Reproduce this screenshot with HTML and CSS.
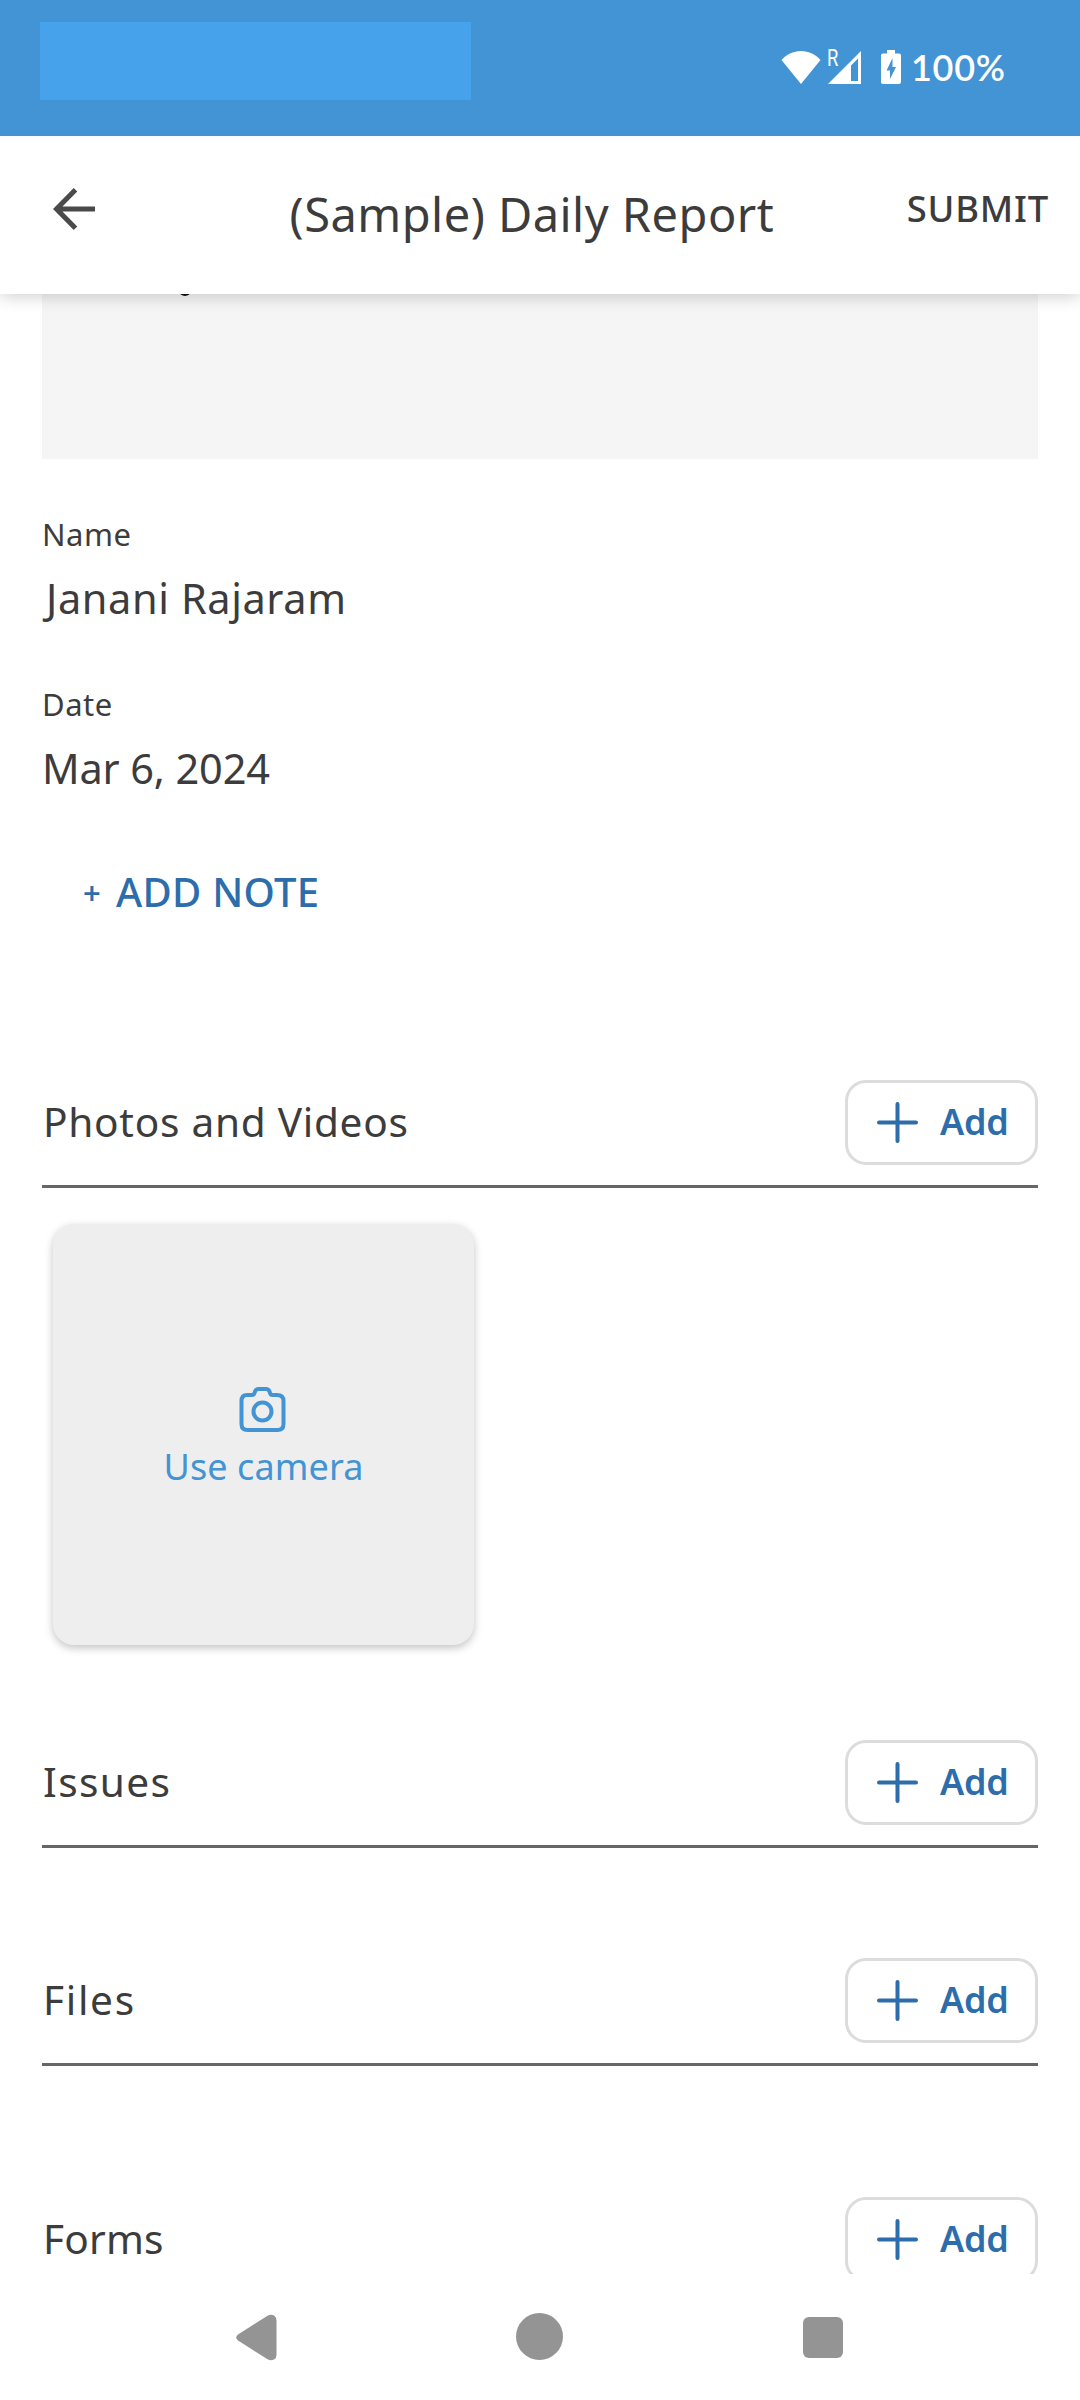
FILE: index.html
```html
<!DOCTYPE html>
<html lang="en">
<head>
<meta charset="utf-8">
<title>Daily Report</title>
<link rel="stylesheet" href="styles.css">
</head>
<body>
<header class="status">
  <div class="status-block"></div>
  <div class="status-icons">
    <svg class="wifi" width="40" height="33" viewBox="0 0 40 33"><path fill="#fff" d="M20 0C28 0 34.500 3.500 39.500 9L20 33L.5 9C5.500 3.500 12 0 20 0Z"/></svg>
    <div class="signal">
      <span class="roaming">R</span>
      <svg width="33" height="33" viewBox="0 0 33 33"><path fill="#fff" fill-rule="evenodd" d="M33 0V33H0ZM23 14.500V30H30V7.500Z"/></svg>
    </div>
    <svg class="battery" width="20" height="34" viewBox="0 0 20 34"><path fill="#fff" fill-rule="evenodd" d="M6 0H14V3.500H18Q20 3.500 20 5.500V32Q20 34 18 34H2Q0 34 0 32V5.500Q0 3.500 2 3.500H6ZM11.500 8L5.500 20.500H9V29L15 17H11.500Z"/></svg>
    <span class="percent">100%</span>
  </div>
</header>
<div class="appbar">
  <svg class="back" width="42" height="42" viewBox="0 0 42 42" fill="none" stroke="#4a4a4a" stroke-width="5"><path d="M42 21H4M22.500 1.800L3.500 21L22.500 40.200"/></svg>
  <h1 class="title">(Sample) Daily Report</h1>
  <button class="submit">SUBMIT</button>
</div>
<main class="content">
  <div class="note-box"><span class="descender"></span></div>
  <div class="field"><div class="label">Name</div><div class="value person">Janani Rajaram</div></div>
  <div class="field"><div class="label">Date</div><div class="value date">Mar 6, 2024</div></div>
  <button class="add-note"><span class="plus">+</span><span>ADD NOTE</span></button>

  <section class="section photos">
    <div class="head"><h2>Photos and Videos</h2><button class="add"><svg width="41" height="41" viewBox="0 0 41 41"><path d="M20.500 2V39M2 20.500H39"/></svg><span>Add</span></button></div>
    <div class="card">
      <svg width="47" height="45" viewBox="0 0 47 45" fill="none" stroke="#4394d4" stroke-width="4" stroke-linejoin="round"><path d="M8 8H13Q15 8 15.500 6L16 4.500Q17 2 19.500 2H27Q29.500 2 30.500 4.500L31 6Q31.500 8 33.500 8H38Q44.500 8 44.500 14V37Q44.500 43 38.500 43H8.500Q2.500 43 2.500 37V14Q2.500 8 8 8Z"/><circle cx="23.500" cy="24.500" r="9"/></svg>
      <span>Use camera</span>
    </div>
  </section>
  <section class="section issues">
    <div class="head"><h2>Issues</h2><button class="add"><svg width="41" height="41" viewBox="0 0 41 41"><path d="M20.500 2V39M2 20.500H39"/></svg><span>Add</span></button></div>
  </section>
  <section class="section files">
    <div class="head"><h2>Files</h2><button class="add"><svg width="41" height="41" viewBox="0 0 41 41"><path d="M20.500 2V39M2 20.500H39"/></svg><span>Add</span></button></div>
  </section>
  <section class="section forms">
    <div class="head"><h2>Forms</h2><button class="add"><svg width="41" height="41" viewBox="0 0 41 41"><path d="M20.500 2V39M2 20.500H39"/></svg><span>Add</span></button></div>
  </section>
</main>
<nav class="navbar">
  <svg width="41" height="47" viewBox="0 0 41 47"><path fill="#949494" d="M32 1.500Q35 0 38 1.500Q40.500 3 40.500 6V41Q40.500 44 38 45.500Q35 47 32 45.500L2 26.500Q-1.500 23.500 2 20.500Z"/></svg>
  <span class="home"></span>
  <span class="recent"></span>
</nav>
</body>
</html>
```
FILE: styles.css
```css
* { box-sizing: border-box; margin: 0; padding: 0; }
body {
  width: 1080px; height: 2400px; overflow: hidden;
  display: flex; flex-direction: column;
  background: #fff; color: #3c3c3c;
  font-family: "Noto Sans", sans-serif;
}
button { background: none; border: 0; font: inherit; color: inherit; }
svg { display: block; flex: none; }

.status {
  flex: none; height: 136px; padding: 22px 75px 0 40px; position: relative; z-index: 2;
  display: flex; justify-content: space-between; align-items: flex-start;
  background: #4394d4;
}
.status-block { width: 431px; height: 78px; background: #46a3eb; }
.status-icons { display: flex; padding-top: 28px; height: 70px; color: #fff; }
.wifi { margin-top: 1px; }
.signal { display: flex; width: 35px; margin: 1px 19px 0 6px; padding: 0 0 0 1px; position: relative; }
.roaming {
  position: absolute; left: 0; top: -1px;
  font: 400 23px/18px Roboto, sans-serif; transform: scaleX(.8); transform-origin: left;
}
.percent { margin: -1px 0 0 10px; width: 94px; font: 600 36px/36px Lato, sans-serif; letter-spacing: .7px; white-space: nowrap; }

.appbar {
  flex: none; height: 158px; padding: 0 31px 0 53px; position: relative; z-index: 1;
  display: flex; justify-content: space-between;
  background: #fff; box-shadow: 0 2px 16px rgba(0, 0, 0, .2);
}
.back { margin-top: 52px; }
.title { margin: 45px -62px 0 0; font-size: 47px; line-height: 66px; font-weight: 400; letter-spacing: .47px; }
.submit { height: 50px; margin-top: 47px; font-size: 36.4px; line-height: 50px; font-weight: 500; letter-spacing: .81px; }

.content { flex: none; height: 1980px; padding: 0 42px; overflow: hidden; }
.note-box { height: 165px; margin-bottom: 55px; background: #f5f5f5; overflow: hidden; }
.descender { display: block; width: 12px; height: 12px; margin: -10px 0 0 137px; border-radius: 50%; background: #111; }
.field { margin-bottom: 58px; }
.label { font-size: 31px; line-height: 40px; font-weight: 400; letter-spacing: .5px; }
.value { margin-top: 16px; font-size: 41.5px; line-height: 56px; font-weight: 400; }
.person { padding-left: 4px; letter-spacing: .6px; }
.date { letter-spacing: -.15px; }
.add-note {
  display: flex; margin: 69px 0 0 41px; height: 54px;
  color: #2e6dab; font-size: 40px; line-height: 54px; font-weight: 500; letter-spacing: .3px;
}
.plus { width: 33px; font-size: 31px; font-weight: 600; text-align: left; }

.head { display: flex; justify-content: space-between; height: 108px; padding-bottom: 20px; border-bottom: 3px solid #666; }
h2 { padding-left: 1px; font-size: 40.6px; line-height: 84px; font-weight: 400; letter-spacing: .72px; }
.photos { margin-top: 161px; }
.issues { margin-top: 95px; }
.issues h2 { letter-spacing: 1.4px; }
.files { margin-top: 110px; }
.files h2 { letter-spacing: 1.7px; }
.forms { margin-top: 131px; }
.forms h2 { letter-spacing: .17px; }
.add {
  display: flex; align-items: center; width: 193px; height: 85px; padding: 0 0 0 29px;
  border: 3px solid #dcdcdc; border-radius: 21px;
  color: #2e6dab; font-size: 36px; font-weight: 600; letter-spacing: -.3px;
}
.add svg { fill: none; stroke: #2e6dab; stroke-width: 4; stroke-linecap: round; }
.add span { margin-left: 22px; padding-bottom: 1px; line-height: 50px; }
.card {
  width: 421px; height: 421px; margin: 36px 0 0 11px; padding-top: 163px;
  display: flex; flex-direction: column; align-items: center;
  border-radius: 21px; background: #eee; color: #4394d4;
  box-shadow: 0 3px 8px rgba(0, 0, 0, .24);
  font-size: 36px; line-height: 50px; font-weight: 400; letter-spacing: .1px;
}
.card svg { margin-right: 3px; }
.card span { margin-top: 10px; }

.navbar { flex: none; height: 126px; display: flex; padding: 40px 0 0 236px; align-items: flex-start; background: #fff; }
.home { width: 47px; height: 47px; margin: -1px 0 0 239px; border-radius: 50%; background: #949494; }
.recent { width: 40px; height: 41px; margin: 3px 0 0 240px; border-radius: 6px; background: #949494; }
```
